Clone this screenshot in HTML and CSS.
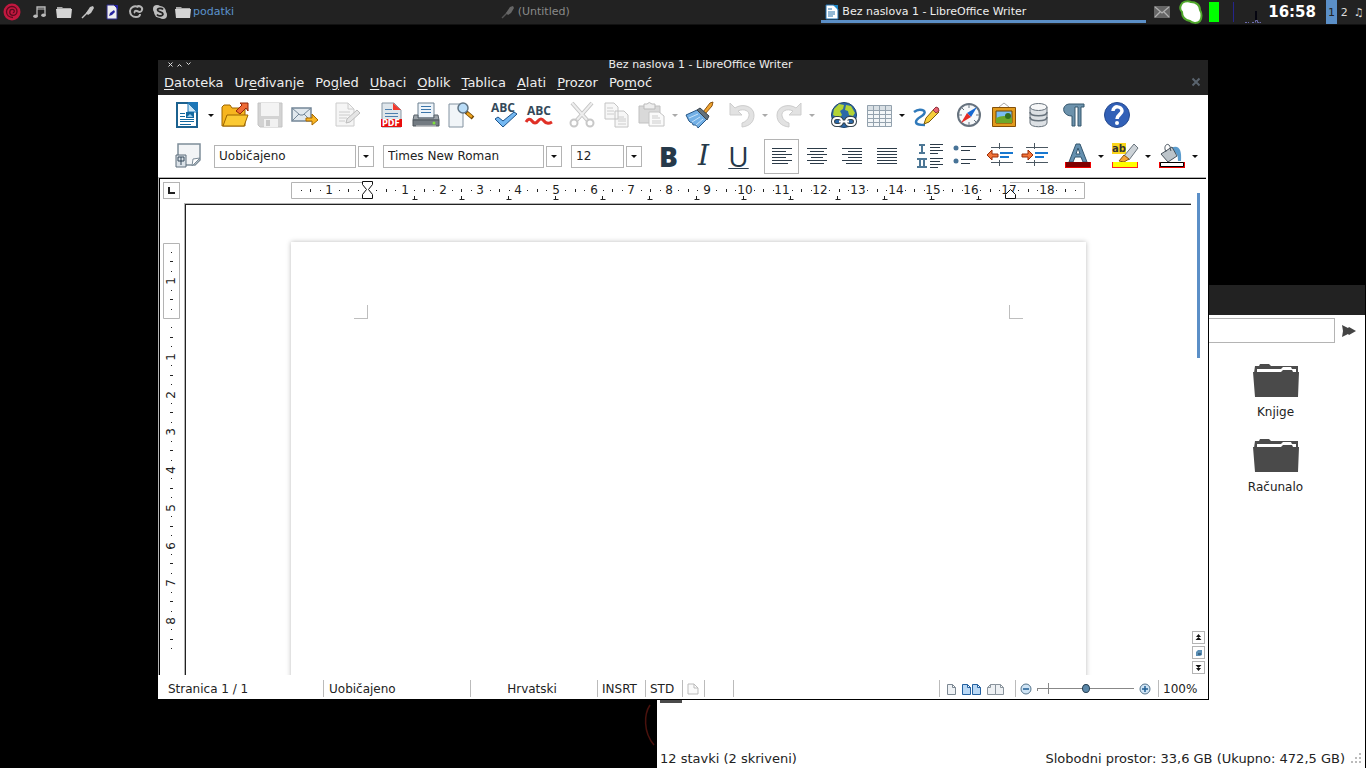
FILE: index.html
```html
<!DOCTYPE html>
<html lang="hr">
<head>
    <meta charset="UTF-8">
    <meta name="viewport" content="width=device-width, initial-scale=1.0">
    <title>Bez naslova 1 - LibreOffice Writer</title>
    <link rel="stylesheet" href="styles.css">
</head>
<body>
    <!-- top panel -->
    <header class="panel">
        <nav class="launchers">
            <button class="launcher" aria-label="Debian"><svg width="18" height="18" viewBox="0 0 18 18"><circle cx="9" cy="9" r="8.5" fill="#c2183f"/><path d="M10 14.500C6 14.500 3.500 12 3.500 8.800S6 3.500 9 3.500s5 2.300 5 4.800-1.900 4-3.900 4S6.800 11 6.800 9.200 8 6.400 9.300 6.400s2 .9 2 1.900-.7 1.500-1.500 1.500" fill="none" stroke="#5b0a1f" stroke-width="1.300"/></svg></button>
            <button class="launcher" aria-label="Glazba"><svg width="16" height="16" viewBox="0 0 16 16"><path d="M5 12V3h8v8" fill="none" stroke="#bbb" stroke-width="1.300"/><path d="M5 5h8" stroke="#bbb"/><ellipse cx="3.500" cy="12.300" rx="2.300" ry="1.700" fill="#bbb"/><ellipse cx="11.500" cy="11.300" rx="2.300" ry="1.700" fill="#bbb"/></svg></button>
            <button class="launcher" aria-label="Datoteke"><svg width="16" height="16" viewBox="0 0 16 16"><path d="M1 3h5l1 1h8v9H1z" fill="#a9a9a9"/><path d="M0 5h16l-1 9H1z" fill="#d4d4d4"/></svg></button>
            <button class="launcher" aria-label="Uređivač"><svg width="16" height="16" viewBox="0 0 16 16"><path d="M2 14l6-6" stroke="#c4c4c4" stroke-width="1.500"/><path d="M6 9l2 2 3-2 3-5-1-2-3 1z" fill="#c4c4c4"/></svg></button>
            <button class="launcher" aria-label="Writer"><svg width="16" height="16" viewBox="0 0 16 16"><path d="M3 1h7l3 3v11H3z" fill="#eee" stroke="#2d2b8c"/><path d="M10 1h4v5z" fill="#2623a0"/><path d="M5 12l1-3 4-3 1 2-3 3z" fill="#2623a0"/></svg></button>
            <button class="launcher" aria-label="Preglednik"><svg width="16" height="16" viewBox="0 0 16 16"><path d="M10 3C6 1 2 4 2 7s2 6 6 6 4-2 4-3" fill="none" stroke="#b5b5b5" stroke-width="2"/><path d="M9 3c2-2 6 0 5 3s-3 2-5 1-3 1-2 2" fill="none" stroke="#b5b5b5" stroke-width="2"/></svg></button>
            <button class="launcher" aria-label="Skype"><svg width="16" height="16" viewBox="0 0 16 16"><circle cx="8" cy="8" r="6" fill="#bdbdbd"/><circle cx="5" cy="5" r="4" fill="#bdbdbd"/><circle cx="11" cy="11" r="4" fill="#bdbdbd"/><path d="M11 5.500C10 4 5.500 4 5.500 6S11 7.800 11 10s-5 2.400-6 .5" fill="none" stroke="#222" stroke-width="1.700"/></svg></button>
        </nav>
        <div class="tasks">
            <button class="task task-blue"><svg width="16" height="16" viewBox="0 0 16 16"><path d="M1 3h5l1 1h8v9H1z" fill="#a9a9a9"/><path d="M0 5h16l-1 9H1z" fill="#d4d4d4"/></svg>podatki</button>
            <button class="task task-dim"><svg width="16" height="16" viewBox="0 0 16 16"><path d="M2 14l6-6" stroke="#555" stroke-width="1.500"/><path d="M6 9l2 2 3-2 3-5-1-2-3 1z" fill="#666"/></svg>(Untitled)</button>
            <button class="task task-active"><svg width="16" height="16" viewBox="0 0 16 16"><path d="M2 1h8l4 4v10H2z" fill="#fff" stroke="#1e6fae"/><path d="M9 1h5v5z" fill="#1e88c8"/><path d="M4 5h4M4 8h7M4 10h7M4 12h5" stroke="#2873ab"/></svg>Bez naslova 1 - LibreOffice Writer</button>
        </div>
        <div class="tray">
            <svg width="16" height="12" viewBox="0 0 16 12"><path d="M0 0h16v12H0z" fill="#666"/><path d="M1 1l7 6 7-6M1 11l5-5M15 11l-5-5" fill="none" stroke="#b0b0b0" stroke-width="1.300"/></svg>
            <svg width="24" height="24" viewBox="0 0 24 24"><path d="M2 5C3 2 8 0 12 2c5 0 9 3 9 8 2 3 2 8 0 11-3 3-8 2-10 0-5-1-8-4-8-9-2-2-2-5-1-7z" fill="#fff" stroke="#50a82c" stroke-width="2"/></svg>
            <span class="battery"></span>
            <span class="cpu-line"></span>
            <svg class="graph" width="18" height="14" viewBox="0 0 18 14"><path d="M11 1h2v9h-2z" fill="#050510"/><path d="M1 12.500h2M4 12.500h1M8 12.500h2M11.500 12.500v-2h2v2h2M16 12.500h1" fill="none" stroke="#6c6cae"/></svg>
            <time class="clock">16:58</time>
        </div>
        <nav class="workspaces">
            <button class="workspace workspace-active">1</button>
            <button class="workspace">2</button>
            <button class="workspace">♫</button>
        </nav>
    </header>

    <!-- glow from the wallpaper -->
    <svg class="wallpaper-arc" width="14" height="46" viewBox="0 0 14 46"><path d="M8 3C2 12 1 30 12 43" fill="none" stroke="#4a120d" stroke-width="1.500"/></svg>

    <!-- file manager -->
    <section class="files">
        <div class="files-title"></div>
        <div class="files-bar">
            <input class="files-path" type="text" aria-label="Putanja">
            <button class="files-go" aria-label="Idi"><svg width="16" height="14" viewBox="0 0 16 14"><path d="M1 1l6 3 1-1 7 4-7 4-1-1-6 3 1-6z" fill="#444"/></svg></button>
        </div>
        <div class="files-body">
            <div class="files-side"><svg width="22" height="18" viewBox="0 0 22 18"><path d="M0 0h22v18H0z" fill="#4a4a4a"/></svg></div>
            <div class="files-grid">
                <a class="folder" href="#">
                    <svg width="46" height="36" viewBox="0 0 46 36"><path d="M2 4h4l1-2h9l2 2h27v7H1z" fill="#4c4c4c"/><path d="M4 7h39v3H4z" fill="#fff"/><path d="M28 7l2-2h8l1 2z" fill="#fff"/><path d="M0 10h28l2-2h9l1 2h6l-1 25H2z" fill="#4a4a4a"/></svg>
                    Knjige
                </a>
                <a class="folder" href="#">
                    <svg width="46" height="36" viewBox="0 0 46 36"><path d="M2 4h4l1-2h9l2 2h27v7H1z" fill="#4c4c4c"/><path d="M4 7h39v3H4z" fill="#fff"/><path d="M28 7l2-2h8l1 2z" fill="#fff"/><path d="M0 10h28l2-2h9l1 2h6l-1 25H2z" fill="#4a4a4a"/></svg>
                    Računalo
                </a>
            </div>
        </div>
        <footer class="files-status">
            <span>12 stavki (2 skriveni)</span>
            <span class="files-space">Slobodni prostor: 33,6 GB (Ukupno: 472,5 GB)</span>
            <svg width="12" height="12" viewBox="0 0 12 12"><path d="M9 1h2v2H9zM5 5h2v2H5zM9 5h2v2H9zM1 9h2v2H1zM5 9h2v2H5zM9 9h2v2H9z" fill="#bbb"/></svg>
        </footer>
    </section>

    <!-- writer -->
    <main class="writer">
        <div class="titlebar">
            <svg class="titlebar-buttons" width="27" height="9" viewBox="0 0 27 9"><path d="M2.500 2.500l4 4M6.500 2.500l-4 4M11.500 6.500l2-2 2 2M20.500 2.500l2 2 2-2" fill="none" stroke="#ddd"/></svg>
            <h1 class="title">Bez naslova 1 - LibreOffice Writer</h1>
        </div>
        <nav class="menubar">
            <button class="menu"><u>D</u>atoteka</button>
            <button class="menu">Ur<u>e</u>đivanje</button>
            <button class="menu">Po<u>g</u>led</button>
            <button class="menu"><u>U</u>baci</button>
            <button class="menu"><u>O</u>blik</button>
            <button class="menu"><u>T</u>ablica</button>
            <button class="menu"><u>A</u>lati</button>
            <button class="menu"><u>P</u>rozor</button>
            <button class="menu">Po<u>m</u>oć</button>
            <button class="menu-close" aria-label="Zatvori"><svg width="10" height="10" viewBox="0 0 10 10"><path d="M1.500 1.500l7 7M8.500 1.500l-7 7" stroke="#59636d" stroke-width="2"/></svg></button>
        </nav>

        <div class="toolbar toolbar-standard">
            <button class="tool" aria-label="Novo"><svg class="icon" viewBox="0 0 28 28"><path d="M3 2h11l9 9v15H3z" fill="#fff" stroke="#1b618f" stroke-width="2"/><path d="M14 1h10v10z" fill="#1b76b8"/><path d="M14 2v9h9z" fill="#c9e5f7" stroke="#1b76b8"/><path d="M6 12.500h5M6 15.500h5M6 18.500h14M6 20.500h14M6 23.500h11" stroke="#12689f"/><path d="M12 11h8v6h-8z" fill="#12689f"/><path d="M13 16l3-3 3 3z" fill="#9acbed"/></svg></button>
            <button class="caret" aria-label="Vrste dokumenata"></button>
            <button class="tool" aria-label="Otvori"><svg class="icon" viewBox="0 0 28 28"><path d="M1 25V6l2-2h6l2 3h13v18z" fill="#f7b51f" stroke="#9c6500"/><path d="M2 25l4-11h21l-4 11z" fill="#fbc933" stroke="#9c6500"/><path d="M15 10l6-6-2-2h8v8l-2-3-6 6z" fill="#ef6b35" stroke="#92270a"/></svg></button>
            <button class="tool" aria-label="Spremi"><svg class="icon" viewBox="0 0 28 28"><path d="M2 2h24v24H4l-2-2z" fill="#d3d3d3" stroke="#c4c4c4"/><path d="M5 2h18v13H5z" fill="#f3f3f3"/><path d="M8 18h14v8H8z" fill="#f1f1f1"/><path d="M10 19h4v6h-4z" fill="#c9c9c9"/></svg></button>
            <button class="tool" aria-label="Pošalji e-poštom"><svg class="icon" viewBox="0 0 28 28"><path d="M1 7h19v13H1z" fill="#e1e8ee" stroke="#748798" stroke-width="1.500"/><path d="M1 7l8 7h3l8-7M1 20l7-7M20 20l-7-7" fill="none" stroke="#748798"/><path d="M15 17h6v-4l6 6-6 5v-4h-6z" fill="#f9b625" stroke="#a76900"/></svg></button>
            <span class="sep"></span>
            <button class="tool" aria-label="Uredi datoteku" disabled><svg class="icon" viewBox="0 0 28 28"><path d="M2 2h12l6 6v17H2z" fill="#f5f5f5" stroke="#ccc"/><path d="M14 2v6h6M5 11h11M5 14h11M5 17h8M5 20h6" fill="none" stroke="#ccc"/><path d="M12 22l1-4L23 9l3 3-10 9z" fill="#e5e5e5" stroke="#bbb"/></svg></button>
            <span class="sep"></span>
            <button class="tool" aria-label="Izvezi kao PDF"><svg class="icon" viewBox="0 0 28 28"><path d="M5 2h12l7 7v17H5z" fill="#dfe6eb" stroke="#8796a3"/><path d="M16 2l8 7h-8z" fill="#f23a2e"/><path d="M8 8.500h7M8 12.500h13M8 15.500h13" stroke="#4d7fae"/><path d="M4 18h21v8H4z" fill="#e80d0d"/><text x="5" y="25" class="pdf-text">PDF</text></svg></button>
            <button class="tool" aria-label="Ispis"><svg class="icon" viewBox="0 0 28 28"><path d="M6 2h16v15H6z" fill="#edf4fa" stroke="#6d8090"/><path d="M9 5.500h10M9 8.500h10M9 11.500h10" stroke="#3c76aa"/><path d="M2 14h4v3h16v-3h4l1 5H1z" fill="#9ca3a9" stroke="#58626b"/><path d="M1 19h26v6H1z" fill="#737b82" stroke="#4c545b"/><path d="M4 25h20" stroke="#ddd"/><circle cx="22" cy="22" r="1.500" fill="#7ee03a"/></svg></button>
            <button class="tool" aria-label="Pregled stranice"><svg class="icon" viewBox="0 0 28 28"><path d="M2 3h14v23H2z" fill="#f1f5f8" stroke="#8292a0"/><path d="M19 11l7 6" stroke="#704500" stroke-width="4"/><path d="M20 12l5 4" stroke="#eda21d" stroke-width="2.500"/><circle cx="16" cy="7" r="5" fill="#b9dcf7" stroke="#5f7485" stroke-width="1.500"/></svg></button>
            <span class="sep"></span>
            <button class="tool" aria-label="Pravopis"><svg class="icon" viewBox="0 0 28 28"><text x="1" y="11" class="abc-text">ABC</text><path d="M5 18l3-2 5 4 11-9 3 2-14 13z" fill="#74b8f2" stroke="#1d538a"/></svg></button>
            <button class="tool" aria-label="Automatska provjera pravopisa"><svg class="icon" viewBox="0 0 28 28"><text x="2" y="14" class="abc-text">ABC</text><path d="M1 21q3-5 6-1t6 0 6 0 8 1" fill="none" stroke="#e03026" stroke-width="3"/></svg></button>
            <span class="sep"></span>
            <button class="tool" aria-label="Izreži" disabled><svg class="icon" viewBox="0 0 28 28"><path d="M4 2l16 18M24 2L8 20" stroke="#c4c4c4" stroke-width="4"/><path d="M4 2l16 18M24 2L8 20" stroke="#eee" stroke-width="2"/><circle cx="6" cy="22" r="3.500" fill="none" stroke="#c8c8c8" stroke-width="2"/><circle cx="22" cy="22" r="3.500" fill="none" stroke="#c8c8c8" stroke-width="2"/></svg></button>
            <button class="tool" aria-label="Kopiraj" disabled><svg class="icon" viewBox="0 0 28 28"><path d="M2 2h9l4 4v12H2zM12 10h9l4 4v12H12z" fill="#f7f7f7" stroke="#c4c4c4"/><path d="M4 7h6M4 10h7M4 13h7M15 16h6M15 18h8M15 20h8M15 23h8" stroke="#ccc"/></svg></button>
            <button class="tool" aria-label="Zalijepi" disabled><svg class="icon" viewBox="0 0 28 28"><path d="M1 5h21v17H1z" fill="#d9d9d9" stroke="#c1c1c1"/><path d="M6 3h3q2-3 5 0h3v5H6z" fill="#eee" stroke="#bbb"/><path d="M11 11h10l5 4v10H11z" fill="#fafafa" stroke="#c4c4c4"/><path d="M14 15h6M14 17h8M14 20h9M14 22h9" stroke="#ccc"/></svg></button>
            <button class="caret caret-off" aria-label="Zalijepi posebno" disabled></button>
            <button class="tool" aria-label="Kist"><svg class="icon" viewBox="0 0 28 28"><path d="M18 11l7-9 3-1-1 4-7 8z" fill="#f0a42f" stroke="#8b5310"/><path d="M1 14l11-5 10 9-9 9c-1-3-3-3-5-3 0-3-3-2-4-4z" fill="#73b0e6" stroke="#255686"/><path d="M12 9l3-2 9 8-2 4z" fill="#63717b" stroke="#36414a"/><path d="M4 17l9-4M7 21l8-5M11 24l7-6" stroke="#c5e2fa"/></svg></button>
            <span class="sep"></span>
            <button class="tool" aria-label="Poništi" disabled><svg class="icon" viewBox="0 0 28 28"><path d="M2 2v12h12l-4-4c6-3 12 0 11 5-1 4-4 6-7 7v4c8-1 12-5 12-12C26 5 14 2 7 7z" fill="#e2e2e2" stroke="#cdcdcd"/></svg></button>
            <button class="caret caret-off" aria-label="Popis za poništavanje" disabled></button>
            <button class="tool" aria-label="Vrati" disabled><svg class="icon" viewBox="0 0 28 28"><path d="M26 2v12H14l4-4c-6-3-12 0-11 5 1 4 4 6 7 7v4C6 25 2 21 2 14 2 5 14 2 21 7z" fill="#e2e2e2" stroke="#cdcdcd"/></svg></button>
            <button class="caret caret-off" aria-label="Popis za vraćanje" disabled></button>
            <span class="sep"></span>
            <button class="tool" aria-label="Hiperveza"><svg class="icon" viewBox="0 0 28 28"><circle cx="14" cy="14" r="12.500" fill="#2b68a8" stroke="#1b426d"/><path d="M4 8l5-5 5 1-1 4-3 2 2 4-3 3-6-3zM16 4l5 1 4 7-2 3-4-1-1-4-3-1z" fill="#b3d334"/><g fill="none" stroke="#35424c" stroke-width="4"><rect x="3" y="17" width="9" height="7" rx="3.500"/><rect x="16" y="17" width="9" height="7" rx="3.500"/><path d="M9 20.500h10"/></g><g fill="none" stroke="#fff" stroke-width="2"><rect x="3" y="17" width="9" height="7" rx="3.500"/><rect x="16" y="17" width="9" height="7" rx="3.500"/><path d="M9 20.500h10"/></g></svg></button>
            <button class="tool" aria-label="Tablica"><svg class="icon" viewBox="0 0 28 28"><path d="M2 4h24v21H2z" fill="#f3f6f8"/><path d="M2 4h24v5H2z" fill="#d9e0e5"/><path d="M2.500 4.500h24v21h-24zM2 9.500h24M2 13.500h24M2 17.500h24M2 21.500h24M8.500 4v21M14.500 4v21M20.500 4v21" fill="none" stroke="#94a2ae"/></svg></button>
            <button class="caret" aria-label="Veličina tablice"></button>
            <button class="tool" aria-label="Crtanje"><svg class="icon" viewBox="0 0 28 28"><path d="M2 11c5-4 13-2 10 2-2 3-8 4-8 8 0 3 5 3 9 3" fill="none" stroke="#2f79ba" stroke-width="2.500"/><path d="M12 23l2-6L23 7l4 4-10 10z" fill="#f6ce3c" stroke="#7d5c0a"/><path d="M21 9l3-3q3 0 3 4l-3 2z" fill="#e86571" stroke="#913640"/></svg></button>
            <span class="sep"></span>
            <button class="tool" aria-label="Navigator"><svg class="icon" viewBox="0 0 28 28"><circle cx="14" cy="14" r="11" fill="#f6f8fa" stroke="#66727e" stroke-width="2"/><path d="M14 4v3M14 21v3M4 14h3M21 14h3M7 7l2 2M21 21l-2-2M7 21l2-2" stroke="#687580"/><path d="M22 6l-6 10-4-4z" fill="#1668d2"/><path d="M6 22l6-10 4 4z" fill="#e52924"/></svg></button>
            <button class="tool" aria-label="Galerija"><svg class="icon" viewBox="0 0 28 28"><path d="M9 6l5-4 5 4" fill="none" stroke="#aaa"/><path d="M2.500 6.500h23v19h-23z" fill="#e29b1d" stroke="#845009"/><path d="M6 10h16v12H6z" fill="#79bdf2" stroke="#6b4508"/><path d="M6 17q8-4 16 0v5H6z" fill="#6da82b"/><circle cx="18" cy="15" r="3" fill="#31701f"/></svg></button>
            <button class="tool" aria-label="Izvori podataka"><svg class="icon" viewBox="0 0 28 28"><path d="M5 6v16c0 5 17 5 17 0V6" fill="#dce0e4" stroke="#66717b"/><ellipse cx="13.500" cy="6" rx="8.500" ry="3.500" fill="#f6f7f8" stroke="#66717b"/><path d="M5 11c0 5 17 5 17 0M5 16c0 5 17 5 17 0" fill="none" stroke="#66717b" stroke-width="1.500"/></svg></button>
            <button class="tool" aria-label="Oznake odlomka"><svg class="icon" viewBox="0 0 28 28"><path d="M9 3h15v3h-3v19h-3V6h-3v19h-3V15C2 15 1 4 9 3z" fill="#6c92ac" stroke="#35566d"/></svg></button>
            <span class="sep"></span>
            <button class="tool" aria-label="Pomoć"><svg class="icon" viewBox="0 0 28 28"><circle cx="14" cy="14" r="12.500" fill="#3160b7" stroke="#24498f"/><path d="M10 10c0-6 9-5 9 0 0 3-5 4-5 8" fill="none" stroke="#fff" stroke-width="3.500"/><circle cx="14" cy="22" r="2" fill="#fff"/></svg></button>
        </div>

        <div class="toolbar toolbar-format">
            <button class="tool" aria-label="Stilovi"><svg class="icon" viewBox="0 0 28 28"><path d="M4 2h22v16l-5 5H4z" fill="#f2f4f6" stroke="#7e8d99" stroke-width="1.500"/><path d="M26 16l-7 1-1 7z" fill="#fff" stroke="#7e8d99"/><path d="M2 13h10v12H2z" fill="#dbe2e8" stroke="#5c6d7b"/><path d="M7 15v8M4 15v4h6v-4z" fill="none" stroke="#34495a"/></svg></button>
            <label class="combo"><select class="combo-style" aria-label="Stil odlomka"><option>Uobičajeno</option></select><span class="combo-arrow"></span></label>
            <label class="combo"><select class="combo-font" aria-label="Font"><option>Times New Roman</option></select><span class="combo-arrow"></span></label>
            <label class="combo"><select class="combo-size" aria-label="Veličina"><option>12</option></select><span class="combo-arrow"></span></label>
            <button class="tool letter letter-b">B</button>
            <button class="tool letter letter-i">I</button>
            <button class="tool letter letter-u">U</button>
            <span class="sep"></span>
            <button class="tool tool-on" aria-label="Lijevo"><svg class="icon" viewBox="0 0 28 28"><path d="M4 6.500h20M4 9.500h14M4 12.500h20M4 15.500h14M4 18.500h20M4 21.500h16" stroke="#2c3b48"/></svg></button>
            <button class="tool" aria-label="Sredina"><svg class="icon" viewBox="0 0 28 28"><path d="M4 6.500h20M7 9.500h14M4 12.500h20M8 15.500h12M4 18.500h20M7 21.500h14" stroke="#2c3b48"/></svg></button>
            <button class="tool" aria-label="Desno"><svg class="icon" viewBox="0 0 28 28"><path d="M4 6.500h20M10 9.500h14M4 12.500h20M10 15.500h14M4 18.500h20M8 21.500h16" stroke="#2c3b48"/></svg></button>
            <button class="tool" aria-label="Obostrano"><svg class="icon" viewBox="0 0 28 28"><path d="M4 6.500h20M4 9.500h20M4 12.500h20M4 15.500h20M4 18.500h20M4 21.500h20" stroke="#2c3b48"/></svg></button>
            <span class="sep"></span>
            <button class="tool" aria-label="Numeriranje"><svg class="icon" viewBox="0 0 28 28"><path d="M3 3h6M6 3v8M3 11h6M1 17h10M4 17v8M8 17v8M1 25h10" stroke="#4d7795" stroke-width="2"/><path d="M14 2.500h13M14 5.500h10M14 8.500h13M14 11.500h8M14 16.500h13M14 19.500h10M14 22.500h13M14 25.500h8" stroke="#2c3b48"/></svg></button>
            <button class="tool" aria-label="Grafičke oznake"><svg class="icon" viewBox="0 0 28 28"><circle cx="5" cy="6" r="2.500" fill="#477397"/><circle cx="5" cy="19" r="2.500" fill="#477397"/><path d="M10 4.500h15M10 8.500h9M10 17.500h15M10 21.500h9" stroke="#2c3b48"/></svg></button>
            <button class="tool" aria-label="Smanji uvlačenje"><svg class="icon" viewBox="0 0 28 28"><path d="M5 5.500h22M13.500 1v6M5 20.500h22M13.500 18v6" stroke="#4b5862"/><path d="M14 11h13M14 15h9" stroke="#1878d0" stroke-width="2"/><path d="M1 13l5-5v4h6v3H6v3z" fill="#f27438" stroke="#9c2d08"/></svg></button>
            <button class="tool" aria-label="Povećaj uvlačenje"><svg class="icon" viewBox="0 0 28 28"><path d="M5 5.500h22M13.500 1v6M5 20.500h22M13.500 18v6" stroke="#4b5862"/><path d="M14 11h13M14 15h9" stroke="#1878d0" stroke-width="2"/><path d="M12 13L7 8v4H1v3h6v3z" fill="#f27438" stroke="#9c2d08"/></svg></button>
            <span class="sep"></span>
            <button class="tool" aria-label="Boja fonta"><svg class="icon" viewBox="0 0 28 28"><path d="M5 20L12 2h4l7 18h-4l-2-5h-6l-2 5zM12 12h4l-2-6z" fill="#6590af" stroke="#33566f"/><path d="M1 20h26v6H1z" fill="#e00"/><path d="M2 20h24v5H2z" fill="#800000"/></svg></button>
            <button class="caret" aria-label="Odaberi boju fonta"></button>
            <button class="tool" aria-label="Isticanje"><svg class="icon" viewBox="0 0 28 28"><path d="M1 1h14v11H1z" fill="#fbd51c"/><text x="1" y="10" class="ab-text">ab</text><path d="M13 14L23 2l4 4-9 12z" fill="#ccd2d7" stroke="#68737c"/><path d="M8 19l5-6 5 4-5 3z" fill="#f5a436" stroke="#8b560d"/><path d="M1 20h26v6H1z" fill="#f22"/><path d="M2 20h24v5H2z" fill="#ff0"/></svg></button>
            <button class="caret" aria-label="Odaberi boju isticanja"></button>
            <button class="tool" aria-label="Boja pozadine"><svg class="icon" viewBox="0 0 28 28"><path d="M13 6c8-4 11 2 10 13h-3c0-6-1-8-5-9z" fill="#5b9ccd"/><path d="M3 12l11-7 5 9-9 6z" fill="#bcc4ca" stroke="#47525c"/><path d="M8 10c-3-6 1-9 3-7s1 5 2 6" fill="none" stroke="#47525c"/><path d="M1 20h26v6H1z" fill="#e00"/><path d="M2.500 20.500h23v4h-23z" fill="#fff" stroke="#000"/></svg></button>
            <button class="caret" aria-label="Odaberi boju pozadine"></button>
        </div>

        <div class="editor">
            <div class="editor-main">
                <div class="ruler-row">
                    <span class="tab-type"><svg width="15" height="15" viewBox="0 0 15 15"><path d="M5 4v6h6" fill="none" stroke="#222" stroke-width="2"/></svg></span>
                    <div class="ruler-track"><svg id="rulerH" width="795" height="22"></svg></div>
                </div>
                <div class="editor-body">
                    <div class="ruler-side"><svg id="rulerV" width="18" height="420"></svg></div>
                    <div class="canvas">
                        <article class="page">
                            <span class="crop crop-left"></span>
                            <span class="crop crop-right"></span>
                        </article>
                    </div>
                </div>
            </div>
            <div class="scroll">
                <span class="scroll-thumb"></span>
                <button class="scroll-button" aria-label="Prethodna stranica"><svg width="11" height="11" viewBox="0 0 11 11"><path d="M5.500 2l2.500 3H3zM5.500 5l3 3h-6z" fill="#111"/></svg></button>
                <button class="scroll-button" aria-label="Navigacija"><svg width="11" height="11" viewBox="0 0 11 11"><path d="M3 9V5l2-2h4v5l-2 1z" fill="#5b8fb5"/><path d="M5 7h3" stroke="#1e3d55"/></svg></button>
                <button class="scroll-button" aria-label="Sljedeća stranica"><svg width="11" height="11" viewBox="0 0 11 11"><path d="M5.500 9L3 6h5zM5.500 6l-3-3h6z" fill="#111"/></svg></button>
            </div>
        </div>

        <footer class="status">
            <span class="cell cell-page">Stranica 1 / 1</span>
            <span class="cell cell-style">Uobičajeno</span>
            <span class="cell cell-lang">Hrvatski</span>
            <span class="cell cell-mode">INSRT</span>
            <span class="cell cell-std">STD</span>
            <span class="cell cell-sign"><svg width="12" height="12" viewBox="0 0 12 12"><path d="M1 1h6l4 4v6H1zM7 1v4h4" fill="#fafafa" stroke="#bbb"/></svg></span>
            <span class="cell cell-empty"></span>
            <span class="cell cell-fill"></span>
            <span class="cell cell-views">
                <svg width="9" height="12" viewBox="0 0 9 12"><path d="M.5 1.500h5l3 3v7h-8zM5.500 1.500v3h3" fill="#eef1f4" stroke="#7c8893"/></svg>
                <svg width="19" height="12" viewBox="0 0 19 12"><path d="M.5 1.500h5l3 3v7h-8zM5.500 1.500v3h3M10.500 1.500h5l3 3v7h-8zM15.500 1.500v3h3" fill="#b9d8f5" stroke="#2461a0"/></svg>
                <svg width="17" height="12" viewBox="0 0 17 12"><path d="M.5 4.500l3-3h5v10h-8zM8.500 1.500h5l3 3v7h-8zM3.500 1.500v3h-3M13.500 1.500v3h3" fill="#eef1f4" stroke="#8a949d"/></svg>
            </span>
            <span class="cell cell-zoom">
                <button class="zoom-button" aria-label="Umanji"><svg width="12" height="12" viewBox="0 0 12 12"><circle cx="6" cy="6" r="5" fill="#cfe4f5" stroke="#55748c"/><path d="M3 6h6" stroke="#205e93" stroke-width="1.500"/></svg></button>
                <input class="zoom-range" type="range" min="0" max="100" value="50" aria-label="Zumiranje">
                <button class="zoom-button" aria-label="Uvećaj"><svg width="12" height="12" viewBox="0 0 12 12"><circle cx="6" cy="6" r="5" fill="#cfe4f5" stroke="#55748c"/><path d="M3 6h6M6 3v6" stroke="#205e93" stroke-width="1.500"/></svg></button>
            </span>
            <span class="cell-percent">100%</span>
        </footer>
    </main>

    <script>
        const NS = 'http://www.w3.org/2000/svg';
        const CM = 37.75;

        function add(svg, tag, attrs, text) {
            const el = document.createElementNS(NS, tag);
            for (const key in attrs) el.setAttribute(key, attrs[key]);
            if (text !== undefined) el.textContent = text;
            svg.appendChild(el);
        }

        function path(svg, d, cls) {
            add(svg, 'path', { d: d, class: cls });
        }

        // horizontal ruler, zero sits at the left page margin
        const h = document.getElementById('rulerH');
        const zeroH = 76;
        path(h, 'M0.5 1.5h793v16h-793z', 'ruler-box');
        path(h, 'M76 1h643v17h-643z', 'ruler-inner');
        for (let q = -7; q < 76; q++) {
            const x = Math.round(zeroH + q * CM / 4);
            if (q === 0) continue;
            if (q % 4 === 0) {
                add(h, 'text', { x: x, y: 13, class: 'ruler-number' }, Math.abs(q / 4));
            } else if (q % 2 === 0) {
                path(h, `M${x + 0.5} 8v3`, 'tick');
            } else {
                path(h, `M${x + 0.5} 9v1`, 'tick');
            }
        }
        for (let i = 1; i <= 13; i++) {
            path(h, `M${zeroH + i * 47 + 0.5} 15v3m-2 0.5h5`, 'tick');
        }
        path(h, 'M71.500 0.500h10v3l-4 5 4 5v4h-10v-4l4-5-4-5z', 'marker');
        path(h, 'M714.500 17.500v-4l5-5 5 5v4z', 'marker');

        // vertical ruler
        const v = document.getElementById('rulerV');
        const zeroV = 77;
        path(v, 'M0.5 2.500h16v75h-16z', 'ruler-box');
        for (let q = -7; q < 36; q++) {
            const y = Math.round(zeroV + q * CM / 4);
            if (q === 0) continue;
            if (q % 4 === 0) {
                add(v, 'text', { x: 0, y: 0, class: 'ruler-number', transform: `translate(12 ${y + 1}) rotate(-90)` }, Math.abs(q / 4));
            } else if (q % 2 === 0) {
                path(v, `M7 ${y + 0.5}h3`, 'tick');
            } else {
                path(v, `M8 ${y + 0.5}h1`, 'tick');
            }
        }
    </script>
</body>
</html>
```
FILE: styles.css
```css
* {
    box-sizing: border-box;
}

body {
    margin: 0;
    height: 100vh;
    overflow: hidden;
    position: relative;
    background: #000;
    color: #222;
    font-family: "DejaVu Sans", sans-serif;
    font-size: 12px;
}

button {
    margin: 0;
    padding: 0;
    border: 0;
    background: none;
    color: inherit;
    font: inherit;
}

svg {
    display: block;
    flex: none;
}

/* panel */
.panel {
    display: flex;
    height: 25px;
    background: #222;
    border-bottom: 1px solid #111;
    font-size: 11px;
}

.launchers {
    display: flex;
    align-items: center;
}

.launcher {
    width: 24px;
    display: flex;
    justify-content: center;
}

.launcher:first-child {
    width: 28px;
    padding-right: 4px;
}

.tasks {
    flex: 1;
    display: flex;
}

.task {
    flex: 1;
    display: flex;
    align-items: center;
    gap: 2px;
    padding: 3px 0 0 3px;
    border-bottom: 3px solid transparent;
    margin-bottom: 1px;
}

.task-blue {
    color: #5b92cc;
}

.task-dim {
    color: #8a8a8a;
}

.task-active {
    color: #eee;
    border-color: #5b8fc7;
}

.tray {
    display: flex;
    align-items: center;
    padding: 0 10px 0 8px;
}

.tray svg:nth-child(2) {
    margin-left: 9px;
}

.battery {
    width: 10px;
    height: 20px;
    margin-left: 6px;
    background: #0f0;
}

.cpu-line {
    width: 1px;
    height: 20px;
    margin: 0 10px 0 14px;
    background: #25258c;
}

.graph {
    align-self: flex-end;
}

.clock {
    width: 54px;
    text-align: right;
    color: #fff;
    font-size: 15px;
    font-weight: bold;
}

.workspaces {
    display: flex;
    width: 40px;
}

.workspace {
    flex: 1;
    color: #ddd;
}

.workspace-active {
    flex: 0 0 11px;
    background: #5b8fc7;
    color: #222;
}

.wallpaper-arc {
    position: absolute;
    left: 642px;
    bottom: 20px;
}

/* file manager */
.files {
    position: absolute;
    top: 285px;
    right: 1px;
    bottom: 0;
    left: 657px;
    display: flex;
    flex-direction: column;
    background: #fff;
}

.files-title {
    height: 30px;
    background: #222;
}

.files-bar {
    display: flex;
    align-items: center;
    gap: 6px;
    padding: 3px 8px 0 4px;
}

.files-path {
    flex: 1;
    height: 25px;
    border: 1px solid #b4b4b4;
}

.files-body {
    flex: 1;
    display: flex;
    justify-content: space-between;
}

.files-side {
    align-self: flex-end;
    padding: 0 0 45px 3px;
}

.files-grid {
    padding: 19px 40px 0 0;
    display: flex;
    flex-direction: column;
    gap: 17px;
}

.folder {
    width: 99px;
    display: flex;
    flex-direction: column;
    align-items: center;
    gap: 6px;
    line-height: 16px;
    color: #222;
    text-decoration: none;
}

.files-status {
    display: flex;
    align-items: center;
    height: 20px;
    padding: 0 3px;
    gap: 5px;
    font-size: 13px;
}

.files-space {
    margin-left: auto;
}

/* writer window */
.writer {
    position: absolute;
    top: 60px;
    right: 157px;
    bottom: 68px;
    left: 158px;
    display: flex;
    flex-direction: column;
    background: #fff;
    border: solid #000;
    border-width: 0 1px 1px 0;
}

.titlebar {
    display: flex;
    align-items: center;
    height: 9px;
    padding-left: 8px;
    background: #222;
}

.title {
    flex: 1;
    margin: 0;
    text-align: center;
    color: #eee;
    font-size: 11px;
    font-weight: normal;
    line-height: 9px;
}

.menubar {
    display: flex;
    align-items: center;
    gap: 11px;
    height: 26px;
    padding: 0 7px 0 6px;
    background: #222;
    color: #eee;
    font-size: 13px;
}

.menu u {
    text-underline-offset: 2px;
}

.menu-close {
    margin-left: auto;
}

.toolbar {
    display: flex;
    align-items: center;
    padding-left: 12px;
}

.toolbar-standard {
    height: 40px;
}

.toolbar-format {
    height: 42px;
}

.tool {
    flex: none;
    width: 35px;
    height: 35px;
    display: flex;
    align-items: center;
    justify-content: center;
}

.tool-on {
    border: 1px solid #b4b4b4;
}

.icon {
    width: 28px;
    height: 28px;
    overflow: visible;
}

.sep {
    width: 8px;
}

.caret {
    width: 12px;
    height: 35px;
    display: flex;
    align-items: center;
    justify-content: center;
}

.caret::before,
.combo-arrow::before {
    content: "";
    border: 3px solid transparent;
    border-top-color: #111;
    border-bottom: 0;
}

.caret-off::before {
    border-top-color: #aaa;
}

.pdf-text,
.ab-text {
    font-family: "DejaVu Sans", sans-serif;
    font-weight: bold;
}

.pdf-text {
    font-size: 8px;
    fill: #fff;
}

.abc-text {
    font-family: "Open Sans", sans-serif;
    font-size: 12px;
    font-weight: bold;
    fill: #34495a;
}

.ab-text {
    font-size: 10px;
    fill: #333;
}

.combo {
    display: flex;
    align-items: center;
    gap: 2px;
    margin-left: 9px;
}

.combo + .tool {
    margin-left: 9px;
}

.combo select {
    appearance: none;
    height: 23px;
    margin: 0;
    padding: 0 4px;
    border: 1px solid #b4b4b4;
    border-radius: 0;
    background: #fff;
    color: #222;
    font: inherit;
}

.combo .combo-style {
    width: 142px;
}

.combo .combo-font {
    width: 161px;
}

.combo .combo-size {
    width: 53px;
}

.combo-arrow {
    width: 16px;
    height: 21px;
    border: 1px solid #b4b4b4;
    display: flex;
    align-items: center;
    justify-content: center;
}

.letter {
    color: #26394a;
    font-size: 28px;
    line-height: 28px;
}

.letter-b {
    font-family: "Open Sans", sans-serif;
    font-weight: 800;
}

.letter-i {
    font-family: "DejaVu Serif", serif;
    font-style: italic;
}

.letter-u {
    font-family: "Open Sans", sans-serif;
    text-decoration: underline;
    text-decoration-thickness: 1px;
}

/* editor */
.editor {
    flex: 1;
    min-height: 0;
    display: flex;
    margin-right: 2px;
    border: solid #b4b4b4;
    border-width: 1px 0 0 1px;
    box-shadow: inset 1px 1px #000;
    padding: 1px 0 0 1px;
}

.editor-main {
    flex: 1;
    min-width: 0;
    display: flex;
    flex-direction: column;
}

.ruler-row {
    display: flex;
    height: 24px;
    padding: 2px 0 0 3px;
}

.tab-type {
    width: 17px;
    height: 17px;
    margin-top: 1px;
    border: 1px solid #b4b4b4;
}

.ruler-track {
    flex: 1;
    display: flex;
    justify-content: center;
    padding-left: 6px;
}

.ruler-box {
    fill: #fff;
    stroke: #b4b4b4;
}

.ruler-inner {
    fill: #fff;
    stroke: #b4b4b4;
    stroke-width: 0;
}

.ruler-number {
    font-size: 12px;
    text-anchor: middle;
    fill: #222;
}

.tick {
    fill: none;
    stroke: #222;
}

.marker {
    fill: #fff;
    stroke: #111;
}

.editor-body {
    flex: 1;
    min-height: 0;
    display: flex;
}

.ruler-side {
    width: 24px;
    padding: 38px 0 0 3px;
    overflow: hidden;
}

.canvas {
    flex: 1;
    overflow: hidden;
    display: flex;
    justify-content: center;
    padding: 38px 0 0 1px;
    border: solid #b4b4b4;
    border-width: 1px 0 0 1px;
    box-shadow: inset 1px 1px #222;
}

.page {
    width: 795px;
    min-height: 1123px;
    display: flex;
    justify-content: space-between;
    padding: 63px;
    box-shadow: 0 0 5px #bbb;
}

.crop {
    width: 14px;
    height: 14px;
    border: solid #bebebe;
    border-width: 0 0 1px;
}

.crop-left {
    border-right-width: 1px;
}

.crop-right {
    border-left-width: 1px;
}

.scroll {
    width: 15px;
    display: flex;
    flex-direction: column;
    align-items: center;
    gap: 2px;
    padding: 14px 0 1px;
}

.scroll-thumb {
    width: 3px;
    height: 165px;
    margin-bottom: auto;
    background: #5b8fc7;
}

.scroll-button {
    border: 1px solid #b4b4b4;
}

/* status bar */
.status {
    display: flex;
    align-items: center;
    height: 24px;
    padding-top: 3px;
}

.cell {
    height: 17px;
    display: flex;
    align-items: center;
    padding-left: 5px;
    border-right: 1px solid #bbb;
}

.cell-page {
    width: 166px;
    padding-left: 10px;
}

.cell-style {
    width: 147px;
}

.cell-lang {
    width: 127px;
    padding: 0 4px 0 0;
    justify-content: center;
}

.cell-mode,
.cell-std {
    padding-left: 4px;
}

.cell-mode {
    width: 48px;
}

.cell-std {
    width: 37px;
}

.cell-sign {
    width: 22px;
    padding-left: 4px;
}

.cell-empty {
    width: 29px;
}

.cell-fill {
    flex: 1;
}

.cell-views {
    width: 76px;
    gap: 6px;
    padding-left: 7px;
}

.cell-zoom {
    width: 143px;
    gap: 5px;
    padding-left: 4px;
}

.zoom-range {
    appearance: none;
    width: 97px;
    height: 13px;
    margin: 0;
    background:
        linear-gradient(#888, #888) 0 6px / 100% 1px no-repeat,
        linear-gradient(#888, #888) 11px 1px / 1px 11px no-repeat,
        linear-gradient(#888, #888) 0 6px / 1px 3px no-repeat;
}

.zoom-range::-webkit-slider-thumb {
    appearance: none;
    width: 8px;
    height: 9px;
    border: 1px solid #263f52;
    border-radius: 50%;
    background: #5b87a8;
}

.cell-percent {
    width: 49px;
    padding-left: 4px;
}
```
